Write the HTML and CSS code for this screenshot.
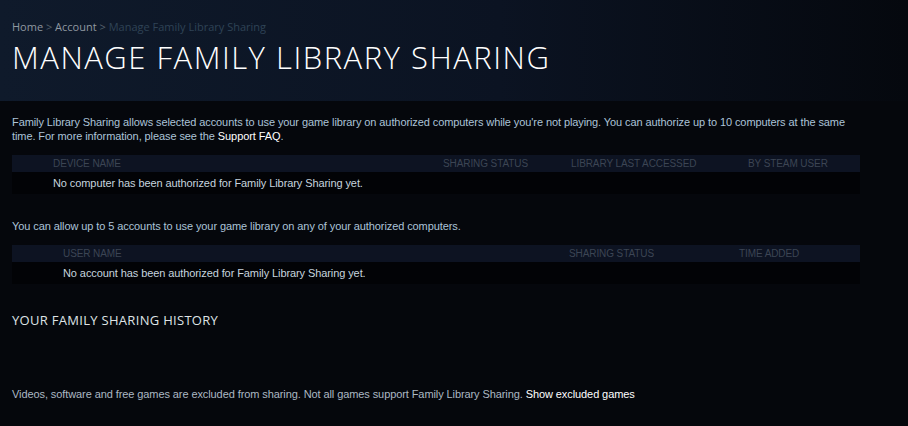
FILE: index.html
```html
<!DOCTYPE html>
<html>
<head>
<meta charset="utf-8">
<title>Manage Family Library Sharing</title>
<link rel="stylesheet" href="styles.css">
</head>
<body>

<div class="page-head">
  <div class="breadcrumbs">
    <a href="#">Home</a> &gt; <a href="#">Account</a> &gt; <span class="current">Manage Family Library Sharing</span>
  </div>
  <h1>Manage Family Library Sharing</h1>
</div>

<div class="page-body">
  <p class="intro">Family Library Sharing allows selected accounts to use your game library on authorized computers while you're not playing. You can authorize up to 10 computers at the same time. For more information, please see the <a href="#">Support FAQ</a>.</p>

  <div class="share-table devices">
    <div class="share-head">
      <span>Device Name</span>
      <span>Sharing Status</span>
      <span>Library Last Accessed</span>
      <span>By Steam User</span>
    </div>
    <div class="share-row">No computer has been authorized for Family Library Sharing yet.</div>
  </div>

  <p class="intro">You can allow up to 5 accounts to use your game library on any of your authorized computers.</p>

  <div class="share-table accounts">
    <div class="share-head">
      <span>User Name</span>
      <span>Sharing Status</span>
      <span>Time Added</span>
    </div>
    <div class="share-row">No account has been authorized for Family Library Sharing yet.</div>
  </div>

  <h2>Your Family Sharing History</h2>

  <p class="footnote">Videos, software and free games are excluded from sharing. Not all games support Family Library Sharing. <a href="#">Show excluded games</a></p>
</div>

</body>
</html>
```

FILE: styles.css
```css
body {
  margin: 0;
  background: #05070c;
  color: #8f98a0;
  font-family: Arial, "Liberation Sans", Helvetica, sans-serif;
  font-size: 11px;
  letter-spacing: -0.09px;
}

a {
  color: #ffffff;
  text-decoration: none;
}

/* Header */

.page-head {
  height: 101px;
  padding: 19px 12px 0;
  box-sizing: border-box;
  background: linear-gradient(to right, #0f1a2b 0%, #0b1322 55%, #05080e 100%);
}

.breadcrumbs {
  font-family: "Open Sans", sans-serif;
  font-size: 11px;
  letter-spacing: 0;
  color: #56616b;
  line-height: 16px;
}

.breadcrumbs a {
  color: #8f98a0;
}

.breadcrumbs .current {
  color: #2f4356;
}

h1 {
  margin: 2px 0 0;
  font-family: "Open Sans", sans-serif;
  font-weight: 300;
  font-size: 31px;
  line-height: 40px;
  letter-spacing: 1.5px;
  text-transform: uppercase;
  color: #ffffff;
}

/* Body */

.page-body {
  padding: 14px 12px 0;
  width: 848px;
}

.intro {
  margin: 0;
  color: #acc3d8;
  line-height: 14px;
}

.share-table {
  margin: 12px 0 25px;
}

.share-head {
  display: grid;
  height: 17px;
  align-items: center;
  background: #0d1322;
  font-size: 10px;
  text-transform: uppercase;
  color: #3c4554;
}

.share-row {
  height: 22px;
  line-height: 22px;
  background: #020306;
  color: #c6d4df;
}

.devices .share-head {
  grid-template-columns: 390px 128px 177px 1fr;
  padding-left: 41px;
}

.devices .share-row {
  padding-left: 41px;
}

.accounts .share-head {
  grid-template-columns: 506px 170px 1fr;
  padding-left: 51px;
}

.accounts .share-row {
  padding-left: 51px;
}

h2 {
  margin: 27px 0 0;
  font-family: "Open Sans", sans-serif;
  font-weight: 400;
  font-size: 13px;
  letter-spacing: 0.3px;
  text-transform: uppercase;
  color: #dfe3e6;
}

.footnote {
  margin: 59px 0 0;
  color: #acb8c3;
}
```
